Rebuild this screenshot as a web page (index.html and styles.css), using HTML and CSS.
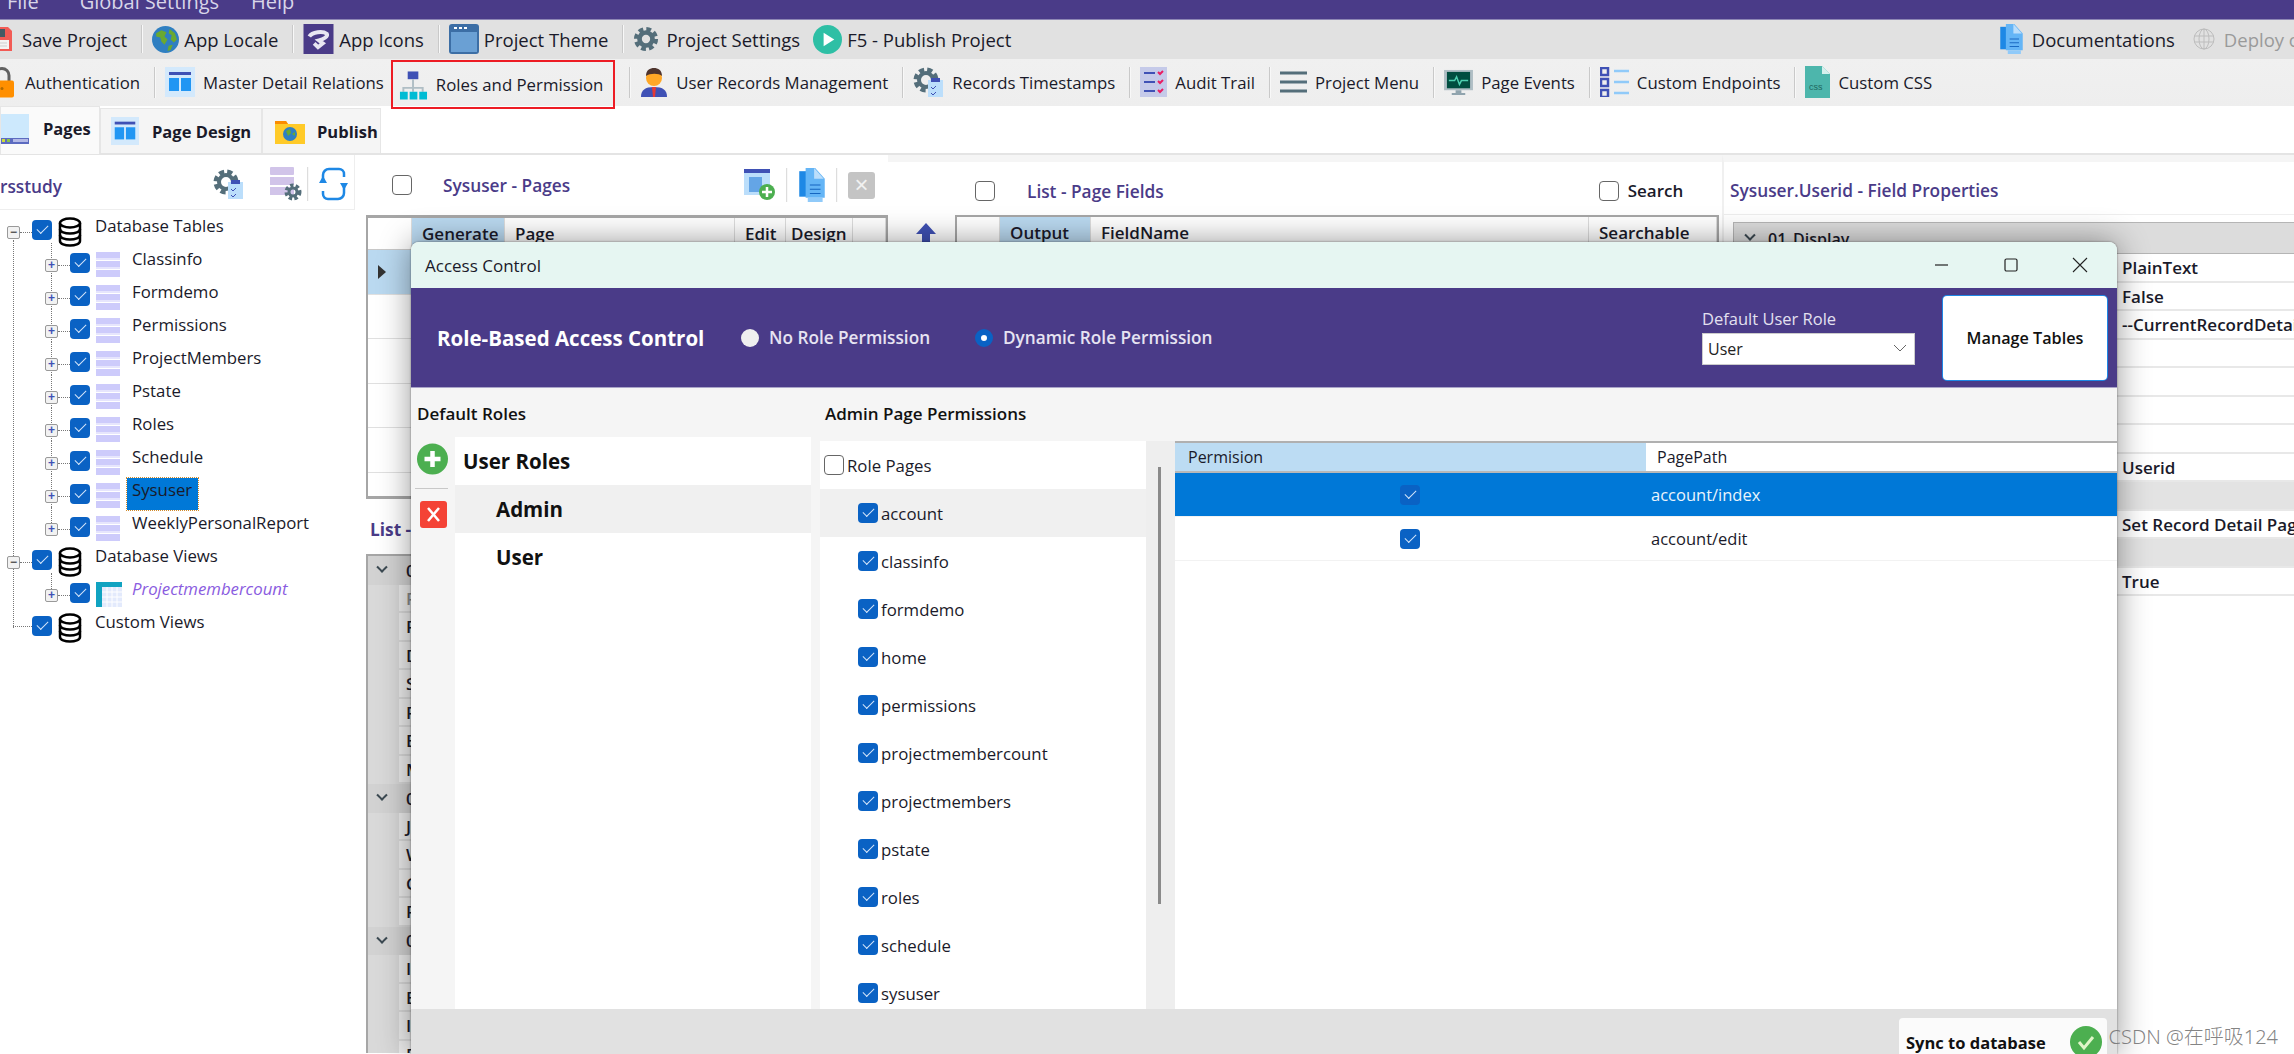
FILE: index.html
```html
<!DOCTYPE html>
<html lang="en">
<head>
    <meta charset="UTF-8">
    <meta name="viewport" content="width=device-width, initial-scale=1.0">
    <title>Access Control</title>
    <link rel="stylesheet" href="styles.css">
</head>
<body>
    <svg class="defs" width="0" height="0">
        <symbol id="i-save" viewBox="0 0 26 26"><path d="M1 1h20l4 4v20H1z" fill="#f25b55"/><rect x="4" y="3" width="14" height="8" fill="#455a64"/><rect x="4" y="14" width="18" height="9" fill="#f4f4f4"/><path d="M6 17h14M6 20h14" stroke="#cfcfcf"/></symbol>
        <symbol id="i-globe" viewBox="0 0 26 26"><circle cx="13" cy="13" r="13" fill="#2f7fc1"/><path d="M4 7l5-3 5 2-2 4 3 3-3 5-3-3-1-4-4-1zM17 3l5 4 2 6-3 3-3-3 1-4-3-2zM16 19l4-1-2 5-3 1z" fill="#6aa92f"/></symbol>
        <symbol id="i-appicons" viewBox="0 0 31 31"><rect width="31" height="31" fill="#4a3b88"/><path d="M6 13c3-5 14-6 18-3 2 3-4 6-8 7l4 3-5 4-4-4" fill="none" stroke="#e8e6f2" stroke-width="4"/></symbol>
        <symbol id="i-theme" viewBox="0 0 30 30"><rect width="30" height="30" rx="3" fill="#3c6ea5"/><rect x="2" y="8" width="26" height="20" fill="#6aa0d4"/><path d="M5 4h3M10 4h3M15 4h3" stroke="#fff" stroke-width="2"/></symbol>
        <symbol id="i-gear" viewBox="0 0 28 28"><circle cx="14" cy="14" r="10.5" fill="none" stroke="#546e7a" stroke-width="5" stroke-dasharray="5 3.25"/><circle cx="14" cy="14" r="7" fill="none" stroke="#546e7a" stroke-width="5"/></symbol>
        <symbol id="i-play" viewBox="0 0 30 30"><circle cx="15" cy="15" r="15" fill="#2ebfa5"/><path d="M11 8l11 7-11 7z" fill="#fff"/></symbol>
        <symbol id="i-lock" viewBox="0 0 30 30"><path d="M8 14V8a7 7 0 0 1 14 0v6" fill="none" stroke="#616161" stroke-width="3"/><rect x="3" y="13" width="24" height="17" rx="2" fill="#ff8f00"/><circle cx="15" cy="21" r="1.5" fill="#b26a00"/></symbol>
        <symbol id="i-layout" viewBox="0 0 30 30"><rect width="30" height="30" fill="#d3e9fc"/><rect x="4" y="5" width="22" height="3" fill="#3f51b5"/><rect x="4" y="11" width="10" height="13" fill="#2196f3"/><rect x="16" y="11" width="10" height="13" fill="#2196f3"/></symbol>
        <symbol id="i-org" viewBox="0 0 30 30"><rect x="9" y="1" width="11" height="8" fill="#3f51b5"/><path d="M14.500 9v9M4.500 22v-4h20v4M14.500 18v4" fill="none" stroke="#b0bec5" stroke-width="2"/><path d="M1 22h8v8H1zM11 22h8v8h-8zM21 22h8v8h-8z" fill="#00bcd4"/></symbol>
        <symbol id="i-user" viewBox="0 0 28 30"><path d="M1 30c0-7 4-10 13-10s13 3 13 10z" fill="#3f51b5"/><path d="M12 20h4l-1 10h-2z" fill="#e53935"/><circle cx="14" cy="11" r="8" fill="#ffa726"/><path d="M6 9c0-6 4-8 8-8s8 2 8 8c-3-3-12-3-16 0z" fill="#4e342e"/></symbol>
        <symbol id="i-gearclip" viewBox="0 0 31 30"><circle cx="13" cy="13" r="10" fill="none" stroke="#546e7a" stroke-width="5" stroke-dasharray="5 3"/><circle cx="13" cy="13" r="7" fill="none" stroke="#546e7a" stroke-width="4"/><rect x="15" y="13" width="15" height="17" fill="#bbdefb"/><rect x="18" y="11" width="9" height="4" fill="#3f51b5"/><path d="M18 20l2 2 3-3M18 26l2 2 3-3" fill="none" stroke="#3f51b5"/></symbol>
        <symbol id="i-audit" viewBox="0 0 27 30"><rect width="27" height="30" fill="#c5cae9"/><path d="M4 6h11M4 15h11M4 24h11" stroke="#3f51b5" stroke-width="2"/><path d="M18 5l2 2 3-3M18 14l2 2 3-3M18 23l2 2 3-3" fill="none" stroke="#e91e63" stroke-width="2"/></symbol>
        <symbol id="i-menu" viewBox="0 0 27 24"><path d="M0 3h27M0 12h27M0 21h27" stroke="#546e7a" stroke-width="3"/></symbol>
        <symbol id="i-monitor" viewBox="0 0 30 28"><rect y="1" width="30" height="21" fill="#b0bec5"/><rect x="3" y="3" width="24" height="17" fill="#004d40"/><path d="M5 12h6l2-4 3 8 2-4h7" fill="none" stroke="#4dd0b1" stroke-width="1.500"/><path d="M12 22h6v3h4v2H8v-2h4z" fill="#90a4ae"/></symbol>
        <symbol id="i-endpoints" viewBox="0 0 29 30"><path d="M1 1h7v7H1zM1 12h7v7H1zM1 23h7v7H1z" fill="none" stroke="#3f51b5" stroke-width="2.500"/><path d="M14 4h15M14 15h15M14 26h15" stroke="#90caf9" stroke-width="2.500"/></symbol>
        <symbol id="i-css" viewBox="0 0 25 32"><path d="M0 0h17l8 8v24H0z" fill="#4db6ac"/><path d="M17 0l8 8h-8z" fill="#d5f0ed"/><text x="4" y="24" class="css-label">css</text></symbol>
        <symbol id="i-docs" viewBox="0 0 24 32"><path d="M0 3h9v24H0z" fill="#1e88e5"/><path d="M6 0h9l9 10v18H6z" fill="#64b5f6"/><path d="M14 0l9 10h-9z" fill="#bbdefb"/><path d="M10 16h10M10 20h10M10 24h10" stroke="#1565c0"/><path d="M8 28h14v4H8z" fill="#90caf9"/></symbol>
        <symbol id="i-deploy" viewBox="0 0 22 22"><g fill="none" stroke="#bdbdbd"><circle cx="11" cy="11" r="10"/><ellipse cx="11" cy="11" rx="5" ry="10"/><path d="M1 8h20M1 14h20M11 1v20"/></g></symbol>
        <symbol id="i-pagetab" viewBox="0 0 28 30"><rect width="28" height="24" fill="#cde9fd"/><rect y="24" width="28" height="6" fill="#5c6bc0"/><rect x="1" y="25" width="3" height="3" fill="#cddc39"/><rect x="6" y="25" width="3" height="3" fill="#8bc34a"/><rect x="12" y="25" width="15" height="3" fill="#b3b9e6"/></symbol>
        <symbol id="i-folder" viewBox="0 0 30 25"><path d="M0 2h11l2 3h17v20H0z" fill="#ffca28"/><path d="M0 2h11l2 3H0z" fill="#fb8c00"/><circle cx="15" cy="15" r="7" fill="#2f7fc1"/><path d="M11 12l4-2 1 4-3 3zM17 15l3-2v4z" fill="#6aa92f"/></symbol>
        <symbol id="i-dbgear" viewBox="0 0 32 34"><rect width="24" height="8" rx="1" fill="#d1c4e9"/><rect y="10" width="24" height="8" fill="#d1c4e9"/><rect y="20" width="24" height="8" fill="#d1c4e9"/><circle cx="23" cy="25" r="6" fill="none" stroke="#546e7a" stroke-width="5" stroke-dasharray="3 2"/><circle cx="23" cy="25" r="4" fill="none" stroke="#546e7a" stroke-width="3"/></symbol>
        <symbol id="i-refresh" viewBox="0 0 30 36"><g fill="none" stroke="#1e88e5" stroke-width="2.500"><path d="M4 15V9a6 6 0 0 1 6-6h10a5 5 0 0 1 5 5v3"/><path d="M25 21v6a6 6 0 0 1-6 6H9a5 5 0 0 1-5-5v-3"/></g><path d="M0 17h8l-4-7zM21 17h8l-4 7z" fill="#1e88e5"/></symbol>
        <symbol id="i-addpage" viewBox="0 0 32 32"><rect width="26" height="26" fill="#bbdefb"/><rect width="26" height="4" fill="#3f51b5"/><rect x="5" y="8" width="13" height="15" fill="#64a5e6"/><circle cx="23" cy="23" r="8" fill="#4caf50"/><path d="M23 18v10M18 23h10" stroke="#fff" stroke-width="2.500"/></symbol>
        <symbol id="i-db" viewBox="0 0 24 30"><g fill="#fff" stroke="#000" stroke-width="2.500"><path d="M2 6v18c0 6 20 6 20 0V6"/><path d="M2 12c0 6 20 6 20 0M2 18c0 6 20 6 20 0" fill="none"/><ellipse cx="12" cy="6" rx="10" ry="4.500"/></g></symbol>
        <symbol id="i-table" viewBox="0 0 24 25"><path d="M0 0h24v6H0zM0 9h24v6H0zM0 18h24v7H0z" fill="#cdcbfb"/><path d="M0 7h24M0 16h24" stroke="#e6e5fd" stroke-width="2"/></symbol>
        <symbol id="i-view" viewBox="0 0 26 25"><rect width="26" height="25" fill="#e3eafc"/><rect width="26" height="5" fill="#11a3c1"/><rect width="6" height="25" fill="#11a3c1"/><path d="M6 10h20M6 15h20M6 20h20M11 5v20M16 5v20M21 5v20" stroke="#fff"/></symbol>
    </svg>

    <div class="menubar">
        <span class="menu-file">File</span>
        <span class="menu-settings">Global Settings</span>
        <span class="menu-help">Help</span>
    </div>

    <div class="toolbar toolbar-main">
        <div class="tool tool-save"><svg width="26" height="26"><use href="#i-save"/></svg><span>Save Project</span></div>
        <i class="sep"></i>
        <div class="tool"><svg width="27" height="29"><use href="#i-globe"/></svg><span>App Locale</span></div>
        <i class="sep"></i>
        <div class="tool"><svg width="31" height="30"><use href="#i-appicons"/></svg><span>App Icons</span></div>
        <i class="sep"></i>
        <div class="tool"><svg width="30" height="30"><use href="#i-theme"/></svg><span>Project Theme</span></div>
        <i class="sep"></i>
        <div class="tool tool-settings"><svg width="26" height="26"><use href="#i-gear"/></svg><span>Project Settings</span></div>
        <div class="tool tool-publish"><svg width="29" height="29"><use href="#i-play"/></svg><span>F5 - Publish Project</span></div>
        <div class="tool tool-docs"><svg width="23" height="30"><use href="#i-docs"/></svg><span>Documentations</span></div>
        <div class="tool tool-deploy"><svg width="22" height="22"><use href="#i-deploy"/></svg><span>Deploy o</span></div>
    </div>

    <div class="toolbar toolbar-sub">
        <div class="tool tool-auth"><svg width="30" height="31"><use href="#i-lock"/></svg><span>Authentication</span></div>
        <i class="sep"></i>
        <div class="tool"><svg width="30" height="30"><use href="#i-layout"/></svg><span>Master Detail Relations</span></div>
        <div class="tool tool-active"><svg width="29" height="30"><use href="#i-org"/></svg><span>Roles and Permission</span></div>
        <i class="sep"></i>
        <div class="tool"><svg width="28" height="30"><use href="#i-user"/></svg><span>User Records Management</span></div>
        <i class="sep"></i>
        <div class="tool"><svg width="31" height="30"><use href="#i-gearclip"/></svg><span>Records Timestamps</span></div>
        <i class="sep"></i>
        <div class="tool"><svg width="27" height="30"><use href="#i-audit"/></svg><span>Audit Trail</span></div>
        <i class="sep"></i>
        <div class="tool"><svg width="27" height="24"><use href="#i-menu"/></svg><span>Project Menu</span></div>
        <i class="sep"></i>
        <div class="tool"><svg width="29" height="27"><use href="#i-monitor"/></svg><span>Page Events</span></div>
        <i class="sep"></i>
        <div class="tool"><svg width="29" height="30"><use href="#i-endpoints"/></svg><span>Custom Endpoints</span></div>
        <i class="sep"></i>
        <div class="tool"><svg width="25" height="32"><use href="#i-css"/></svg><span>Custom CSS</span></div>
    </div>

    <div class="tabs">
        <div class="tab tab-pages"><svg width="28" height="30"><use href="#i-pagetab"/></svg><span>Pages</span></div>
        <div class="tab tab-design"><svg width="30" height="28"><use href="#i-layout"/></svg><span>Page Design</span></div>
        <div class="tab tab-publish"><svg width="30" height="25"><use href="#i-folder"/></svg><span>Publish</span></div>
    </div>

    <div class="workspace">
        <section class="tree-col">
            <div class="tree-head">
                <span class="panel-title">rsstudy</span>
                <svg class="tree-gear" width="31" height="30"><use href="#i-gearclip"/></svg>
                <svg class="tree-dbgear" width="32" height="34"><use href="#i-dbgear"/></svg>
                <i class="sep"></i>
                <svg width="30" height="36"><use href="#i-refresh"/></svg>
            </div>
            <div class="tree">
                <div class="tree-row root"><b class="twist">−</b><i class="cb"></i><svg class="node-db" width="24" height="30"><use href="#i-db"/></svg><span>Database Tables</span></div>
                <div class="tree-row child"><b class="twist">+</b><i class="cb"></i><svg class="node" width="24" height="25"><use href="#i-table"/></svg><span>Classinfo</span></div>
                <div class="tree-row child"><b class="twist">+</b><i class="cb"></i><svg class="node" width="24" height="25"><use href="#i-table"/></svg><span>Formdemo</span></div>
                <div class="tree-row child"><b class="twist">+</b><i class="cb"></i><svg class="node" width="24" height="25"><use href="#i-table"/></svg><span>Permissions</span></div>
                <div class="tree-row child"><b class="twist">+</b><i class="cb"></i><svg class="node" width="24" height="25"><use href="#i-table"/></svg><span>ProjectMembers</span></div>
                <div class="tree-row child"><b class="twist">+</b><i class="cb"></i><svg class="node" width="24" height="25"><use href="#i-table"/></svg><span>Pstate</span></div>
                <div class="tree-row child"><b class="twist">+</b><i class="cb"></i><svg class="node" width="24" height="25"><use href="#i-table"/></svg><span>Roles</span></div>
                <div class="tree-row child"><b class="twist">+</b><i class="cb"></i><svg class="node" width="24" height="25"><use href="#i-table"/></svg><span>Schedule</span></div>
                <div class="tree-row child"><b class="twist">+</b><i class="cb"></i><svg class="node" width="24" height="25"><use href="#i-table"/></svg><span class="node-selected">Sysuser</span></div>
                <div class="tree-row child last"><b class="twist">+</b><i class="cb"></i><svg class="node" width="24" height="25"><use href="#i-table"/></svg><span>WeeklyPersonalReport</span></div>
                <div class="tree-row root"><b class="twist">−</b><i class="cb"></i><svg class="node-db" width="24" height="30"><use href="#i-db"/></svg><span>Database Views</span></div>
                <div class="tree-row child last"><b class="twist">+</b><i class="cb"></i><svg class="node node-wide" width="26" height="25"><use href="#i-view"/></svg><span class="node-view">Projectmembercount</span></div>
                <div class="tree-row root end"><i class="cb"></i><svg class="node-db" width="24" height="30"><use href="#i-db"/></svg><span>Custom Views</span></div>
            </div>
        </section>

        <section class="pages-col">
            <div class="panel-head pages-head">
                <i class="cb-off"></i>
                <span class="panel-title">Sysuser - Pages</span>
                <svg class="pages-add" width="32" height="32"><use href="#i-addpage"/></svg>
                <i class="sep"></i>
                <svg width="28" height="34"><use href="#i-docs"/></svg>
                <i class="sep"></i>
                <b class="btn-close-gray">×</b>
            </div>
            <div class="data-grid pages-grid">
                <div class="grid-head pages-cols">
                    <span></span><span class="col-on">Generate</span><span>Page</span><span>Edit</span><span>Design</span><span></span>
                </div>
                <div class="grid-row grid-row-sel"><span class="row-head"><i class="row-arrow"></i></span></div>
                <div class="grid-row"><span class="row-head"></span></div>
                <div class="grid-row"><span class="row-head"></span></div>
                <div class="grid-row"><span class="row-head"></span></div>
                <div class="grid-row"><span class="row-head"></span></div>
            </div>
            <div class="list-title"><span class="panel-title">List -</span></div>
            <div class="left-props">
                <div class="cat"><i class="chev"></i><span>0</span></div>
                <div class="prop prop-dim"><span>R</span></div>
                <div class="prop"><span>P</span></div>
                <div class="prop"><span>D</span></div>
                <div class="prop"><span>S</span></div>
                <div class="prop"><span>R</span></div>
                <div class="prop"><span>E</span></div>
                <div class="prop"><span>M</span></div>
                <div class="cat"><i class="chev"></i><span>0</span></div>
                <div class="prop"><span>J</span></div>
                <div class="prop"><span>W</span></div>
                <div class="prop"><span>C</span></div>
                <div class="prop"><span>R</span></div>
                <div class="cat"><i class="chev"></i><span>0</span></div>
                <div class="prop"><span>I</span></div>
                <div class="prop"><span>E</span></div>
                <div class="prop"><span>I</span></div>
                <div class="prop"><span>F</span></div>
            </div>
        </section>

        <section class="fields-col">
            <div class="panel-head fields-head">
                <i class="cb-off"></i>
                <span class="panel-title">List - Page Fields</span>
                <i class="cb-off search-cb"></i>
                <span class="search-label">Search</span>
            </div>
            <div class="fields-body">
                <svg class="arrow-up" width="20" height="22" viewBox="0 0 20 22"><path d="M10 0l10 11h-6v11H6V11H0z" fill="#3f51b5"/></svg>
                <div class="data-grid fields-grid">
                    <div class="grid-head fields-cols">
                        <span></span><span class="col-on">Output</span><span>FieldName</span><span>Searchable</span>
                    </div>
                </div>
            </div>
        </section>

        <section class="props-col">
            <div class="props-title"><span class="panel-title">Sysuser.Userid - Field Properties</span></div>
            <div class="right-props">
                <div class="right-cat"><i class="chev"></i><span>01_Display</span></div>
                <div class="right-row">PlainText</div>
                <div class="right-row">False</div>
                <div class="right-row">--CurrentRecordDetails</div>
                <div class="right-row"></div>
                <div class="right-row"></div>
                <div class="right-row"></div>
                <div class="right-row"></div>
                <div class="right-row">Userid</div>
                <div class="right-row right-gray"></div>
                <div class="right-row">Set Record Detail Page</div>
                <div class="right-row right-gray"></div>
                <div class="right-row">True</div>
            </div>
        </section>
    </div>

    <div class="dialog">
        <div class="dialog-title">
            <span>Access Control</span>
            <div class="win-btns">
                <svg width="16" height="16" viewBox="0 0 16 16"><path d="M1 8h13" stroke="#222" stroke-width="1.200"/></svg>
                <svg width="16" height="16" viewBox="0 0 16 16"><rect x="2" y="2" width="12" height="12" rx="1.500" fill="none" stroke="#222" stroke-width="1.200"/></svg>
                <svg width="16" height="16" viewBox="0 0 16 16"><path d="M1 1l14 14M15 1L1 15" stroke="#222" stroke-width="1.100"/></svg>
            </div>
        </div>
        <div class="dialog-band">
            <span class="band-title">Role-Based Access Control</span>
            <label class="radio radio-none"><i></i>No Role Permission</label>
            <label class="radio radio-dynamic"><i class="radio-on"></i>Dynamic Role Permission</label>
            <div class="role-select">
                <span class="role-label">Default User Role</span>
                <div class="select"><span>User</span><svg width="14" height="9" viewBox="0 0 14 9"><path d="M1 1l6 6 6-6" fill="none" stroke="#666"/></svg></div>
            </div>
            <button class="manage-btn">Manage Tables</button>
        </div>
        <div class="dialog-body">
            <div class="roles-pane">
                <h3 class="section-title">Default Roles</h3>
                <div class="roles-main">
                    <div class="role-tools">
                        <svg width="31" height="32" viewBox="0 0 31 32"><circle cx="15.500" cy="16" r="15.500" fill="#4caf50"/><path d="M15.500 8v16M7.500 16h16" stroke="#fff" stroke-width="4.500"/></svg>
                        <hr>
                        <svg width="27" height="27" viewBox="0 0 27 27"><rect width="27" height="27" rx="3" fill="#f44336"/><path d="M8 7l11 13M19 7L8 20" stroke="#fff" stroke-width="2.500"/></svg>
                    </div>
                    <div class="role-list">
                        <div class="role-row role-top">User Roles</div>
                        <div class="role-row role-on">Admin</div>
                        <div class="role-row">User</div>
                    </div>
                </div>
            </div>
            <div class="pages-pane">
                <h3 class="section-title">Admin Page Permissions</h3>
                <div class="pages-main">
                    <div class="page-list">
                        <div class="page-row page-top"><i class="cb-off"></i>Role Pages</div>
                        <div class="page-row page-on"><i class="cb"></i>account</div>
                        <div class="page-row"><i class="cb"></i>classinfo</div>
                        <div class="page-row"><i class="cb"></i>formdemo</div>
                        <div class="page-row"><i class="cb"></i>home</div>
                        <div class="page-row"><i class="cb"></i>permissions</div>
                        <div class="page-row"><i class="cb"></i>projectmembercount</div>
                        <div class="page-row"><i class="cb"></i>projectmembers</div>
                        <div class="page-row"><i class="cb"></i>pstate</div>
                        <div class="page-row"><i class="cb"></i>roles</div>
                        <div class="page-row"><i class="cb"></i>schedule</div>
                        <div class="page-row"><i class="cb"></i>sysuser</div>
                    </div>
                    <div class="list-scroll"><i></i></div>
                    <div class="perm-table">
                        <div class="perm-head"><span class="perm-col-on">Permision</span><span class="perm-path">PagePath</span></div>
                        <div class="perm-row perm-row-sel"><span><i class="cb"></i></span><span>account/index</span></div>
                        <div class="perm-row"><span><i class="cb"></i></span><span>account/edit</span></div>
                    </div>
                </div>
            </div>
        </div>
        <div class="dialog-foot">
            <button class="sync-btn"><span>Sync to database</span><svg width="32" height="32" viewBox="0 0 32 32"><circle cx="16" cy="16" r="16" fill="#4caf50"/><path d="M9 16l5 6 9-11" fill="none" stroke="#dff5c8" stroke-width="3"/></svg></button>
        </div>
    </div>

    <div class="watermark">CSDN @在呼吸124</div>
</body>
</html>
```

FILE: styles.css
```css
* {
    box-sizing: border-box;
}
body {
    margin: 0;
    width: 2294px;
    height: 1054px;
    overflow: hidden;
    position: relative;
    background-color: #fff;
    color: #1a1a2a;
    font-family: "Open Sans", "Noto Sans", sans-serif;
    font-size: 17px;
}
svg {
    flex-shrink: 0;
}
.defs {
    position: absolute;
}
.css-label {
    font-family: "Liberation Sans", sans-serif;
    font-size: 9px;
    fill: #20685f;
}
h3 {
    margin: 0;
}

/* menu and toolbars */
.menubar {
    height: 20px;
    background-color: #4a3b88;
    border-bottom: 1px solid #8d86b4;
    color: #d8d5e8;
    display: flex;
    align-items: flex-end;
    overflow: hidden;
    font-size: 20px;
    line-height: 24px;
    padding-left: 7px;
    padding-bottom: 5px;
}
.menu-settings {
    margin-left: 41px;
}
.menu-help {
    margin-left: 32px;
}
.toolbar {
    display: flex;
    align-items: center;
    white-space: nowrap;
}
.toolbar-main {
    height: 39px;
    background-color: #e1e1e1;
    font-size: 18.500px;
    padding-bottom: 1px;
    overflow: hidden;
}
.toolbar-sub {
    height: 47px;
    background-color: #eeeeee;
    background: linear-gradient(#f0f0f0, #eeeeee);
    font-size: 16.800px;
    padding-bottom: 1px;
}
.tool {
    display: flex;
    align-items: center;
    gap: 5px;
}
.toolbar-sub .tool {
    gap: 8px;
}
.sep {
    width: 2px;
    height: 28px;
    background-color: #c9c9c9;
    border-right: 1px solid #f8f8f8;
    margin: 0 9px 0 14px;
    flex-shrink: 0;
}
.toolbar-sub .sep {
    height: 31px;
}
.tool-save {
    margin-left: -13px;
    gap: 9px;
}
.tool-settings {
    gap: 7px;
}
.tool-publish {
    margin-left: 13px;
}
.tool-docs {
    margin-left: auto;
    gap: 9px;
}
.tool-deploy {
    margin: 0 -6px 0 18px;
    gap: 9px;
    color: #9a9a9a;
}
.tool-auth {
    margin-left: -13px;
    gap: 11px;
}
.tool-active {
    height: 49px;
    align-self: flex-start;
    margin: 1px 0 0 7px;
    padding: 0 10px 0 6px;
    border: 2px solid #ed1c24;
    position: relative;
}

/* tabs */
.tabs {
    height: 49px;
    display: flex;
    align-items: flex-end;
    border-bottom: 2px solid #e4e4e4;
    font-weight: 700;
    font-size: 16.500px;
}
.tab {
    display: flex;
    align-items: center;
    background-color: #f5f5f5;
    border: 1px solid #e6e6e6;
    border-bottom: 0;
    height: 45px;
}
.tab-pages {
    width: 100px;
    height: 48px;
    background-color: #fafafa;
    gap: 14px;
    padding-bottom: 4px;
    margin-bottom: -1px;
}
.tab-design {
    width: 162px;
    padding-left: 9px;
    gap: 12px;
}
.tab-publish {
    width: 119px;
    padding-left: 12px;
    gap: 12px;
}

/* workspace columns */
.workspace {
    display: flex;
    height: 898px;
    overflow: hidden;
}
.panel-title {
    color: #4a3b88;
    font-weight: 600;
    font-size: 17.300px;
}
.tree-col {
    width: 360px;
    flex-shrink: 0;
}
.tree-head {
    height: 55px;
    width: 355px;
    display: flex;
    align-items: center;
    padding-top: 4px;
    border-right: 1px solid #eee;
    border-bottom: 1px solid #eee;
}
.tree-head .panel-title {
    margin-top: 5px;
}
.tree-gear {
    margin-left: 151px;
}
.tree-dbgear {
    margin-left: 26px;
}
.tree-head .sep {
    height: 34px;
    margin: 0 10px 0 5px;
    background-color: #ddd;
}
.tree {
    position: relative;
    font-size: 16.800px;
}
.tree::before {
    content: "";
    position: absolute;
    left: 13px;
    top: 30px;
    height: 388px;
    border-left: 1px dotted #777;
}
.tree-row {
    height: 33px;
    display: flex;
    align-items: flex-start;
    position: relative;
    line-height: 32px;
    white-space: nowrap;
}
.tree-row.root {
    padding-left: 7px;
}
.tree-row.root.end {
    padding-left: 32px;
}
.tree-row.root.end::after {
    content: "";
    position: absolute;
    left: 13px;
    top: 20px;
    width: 19px;
    border-top: 1px dotted #777;
}
.tree-row.child {
    padding-left: 45px;
}
.tree-row.child::before {
    content: "";
    position: absolute;
    left: 51px;
    top: 0;
    height: 33px;
    border-left: 1px dotted #777;
}
.tree-row.child.last::before {
    height: 22px;
}
.twist {
    width: 13px;
    height: 13px;
    margin-top: 16px;
    border: 1px solid #999;
    border-radius: 2px;
    background-color: #f2f2f2;
    color: #3f51b5;
    font: 700 12px/11px "Liberation Sans", sans-serif;
    text-align: center;
    position: relative;
    z-index: 1;
    flex-shrink: 0;
}
.root > .twist {
    color: #555;
}
.twist::after {
    content: "";
    position: absolute;
    left: 12px;
    top: 5px;
    width: 12px;
    border-top: 1px dotted #777;
}
.cb {
    display: block;
    width: 20px;
    height: 20px;
    border-radius: 4px;
    background-color: #0a62c4;
    position: relative;
    flex-shrink: 0;
}
.cb::after {
    content: "";
    position: absolute;
    left: 5px;
    top: 5px;
    width: 10px;
    height: 5px;
    border-left: 1.2px solid #d5e6fa;
    border-bottom: 1.2px solid #d5e6fa;
    transform: rotate(-45deg);
}
.cb-off {
    display: block;
    width: 20px;
    height: 20px;
    border: 1.5px solid #666;
    border-radius: 4px;
    background-color: #fff;
    flex-shrink: 0;
}
.tree-row .cb {
    margin: 10px 0 0 12px;
}
.tree-row.root.end .cb {
    margin-left: 0;
}
.node-db {
    margin: 7px 13px 0 6px;
}
.node {
    margin: 9px 12px 0 6px;
}
.node-wide {
    margin-right: 10px;
}
.node-selected {
    height: 32px;
    margin: 4px 0 0 -5px;
    padding: 0 6px 0 5px;
    background-color: #0078d7;
    outline: 1px dotted #d18b2c;
    line-height: 24px;
}
.node-view {
    color: #8a5ce0;
    font-style: italic;
}

/* pages column */
.pages-col {
    width: 528px;
    flex-shrink: 0;
    padding-left: 6px;
}
.panel-head {
    display: flex;
    align-items: center;
    height: 60px;
}
.pages-head {
    padding-left: 26px;
}
.pages-head .panel-title {
    margin-left: 31px;
}
.pages-add {
    margin-left: 174px;
}
.pages-head .sep {
    height: 34px;
    margin: 0 10px 0 10px;
    background-color: #ddd;
}
.btn-close-gray {
    width: 27px;
    height: 27px;
    border-radius: 3px;
    background-color: #c4c4c4;
    color: #f1f1f1;
    text-align: center;
    font: 400 24px/26px "Liberation Sans", sans-serif;
}
.data-grid {
    border: 2px solid #a6a6a6;
    border-bottom-width: 3px;
    font-weight: 600;
    font-size: 17px;
}
.pages-grid {
    height: 284px;
    border-top-width: 3px;
    overflow: hidden;
}
.grid-head {
    display: grid;
    height: 32px;
    align-items: center;
    border-bottom: 1px solid #c8c8c8;
    white-space: nowrap;
}
.grid-head > span {
    height: 100%;
    line-height: 32px;
    padding-left: 10px;
    border-right: 1px solid #ddd;
}
.grid-head > .col-on {
    background-color: #bad9f0;
}
.pages-cols {
    grid-template-columns: 44px 93px 230px 51px 67px 1fr;
}
.pages-cols > span:nth-child(5) {
    padding-left: 5px;
}
.fields-cols {
    grid-template-columns: 43px 91px 498px 1fr;
}
.grid-row {
    height: 44.500px;
    border-bottom: 1px solid #e0e0e0;
}
.row-head {
    display: flex;
    align-items: center;
    width: 44px;
    height: 100%;
    border-right: 1px solid #e0e0e0;
    padding-left: 10px;
}
.grid-row-sel .row-head {
    background-color: #bad9f0;
}
.row-arrow {
    border-left: 8px solid #333;
    border-top: 7px solid transparent;
    border-bottom: 7px solid transparent;
}
.list-title {
    height: 55px;
    padding: 19px 0 0 4px;
    line-height: 24px;
}
.list-title .panel-title {
    font-weight: 700;
}
.left-props {
    border-top: 2px solid #a6a6a6;
    border-left: 2px solid #a6a6a6;
    background-color: #d9d9d9;
    font-weight: 600;
}
.cat {
    display: flex;
    align-items: center;
    height: 28.500px;
    background-color: #d2d2d2;
    padding-left: 10px;
    gap: 20px;
    font-size: 17px;
}
.chev {
    width: 8px;
    height: 8px;
    border-right: 2px solid #3c4a52;
    border-bottom: 2px solid #3c4a52;
    transform: rotate(45deg) translate(-2px, -2px);
    flex-shrink: 0;
}
.prop {
    height: 28.500px;
    margin-left: 31px;
    padding-left: 7px;
    background-color: #ececec;
    border-bottom: 2px solid #d9d9d9;
    line-height: 27px;
    font-size: 17px;
}
.prop-dim {
    color: #8a8a8a;
}

/* fields column */
.fields-col {
    width: 834px;
    flex-shrink: 0;
    border-top: 7px solid #f5f5f5;
}
.fields-head {
    height: 53px;
    padding: 5px 0 0 87px;
}
.fields-head .panel-title {
    margin-left: 32px;
}
.search-cb {
    margin-left: 435px;
}
.search-label {
    margin: -2px 0 0 9px;
    font-weight: 600;
}
.fields-body {
    display: flex;
    align-items: flex-start;
}
.arrow-up {
    margin: 8px 19px 0 28px;
}
.fields-grid {
    width: 764px;
    height: 60px;
}

/* field properties column */
.props-col {
    flex: 1;
    border-top: 7px solid #f5f5f5;
    border-left: 2px solid #f0f0f0;
}
.props-title {
    height: 53px;
    padding: 17px 0 0 6px;
    line-height: 24px;
    border-bottom: 1px solid #eee;
}
.right-props {
    margin: 7px 0 0 9px;
    font-weight: 600;
}
.right-cat {
    display: flex;
    height: 32px;
    padding: 5px 0 0 12px;
    gap: 14px;
    background-color: #dcdcdc;
    border: 1px solid #b5b5b5;
    font-size: 16px;
    overflow: hidden;
    align-items: flex-start;
}
.right-cat .chev {
    margin-top: 6px;
}
.right-row {
    height: 28.500px;
    padding-left: 389px;
    line-height: 27px;
    border-bottom: 2px solid #e8e8e8;
    white-space: nowrap;
    overflow: hidden;
}
.right-gray {
    background-color: #e3e3e3;
}

/* dialog */
.dialog {
    position: absolute;
    left: 411px;
    top: 242px;
    width: 1706px;
    height: 812px;
    display: flex;
    flex-direction: column;
    background-color: #f5f5f5;
    border-radius: 8px 8px 0 0;
    box-shadow: 0 0 32px rgba(0, 0, 0, 0.42), 0 0 2px rgba(0, 0, 0, 0.5);
    overflow: hidden;
}
.dialog-title {
    height: 46px;
    background-color: #e6f6f2;
    display: flex;
    align-items: center;
    justify-content: space-between;
    padding-left: 14px;
    font-size: 17px;
}
.win-btns {
    display: flex;
    gap: 53px;
    padding-right: 29px;
}
.dialog-band {
    height: 100px;
    background-color: #4a3b88;
    border-bottom: 1px solid #a9a4c8;
    color: #fff;
    display: flex;
    align-items: center;
    padding-left: 26px;
}
.band-title {
    font-size: 20.500px;
    font-weight: 700;
    width: 304px;
    white-space: nowrap;
}
.radio {
    display: flex;
    align-items: center;
    gap: 10px;
    font-weight: 600;
    font-size: 17.200px;
    color: #e6e3f2;
    white-space: nowrap;
}
.radio i {
    width: 18px;
    height: 18px;
    border-radius: 50%;
    background-color: #efefef;
}
.radio .radio-on {
    background-color: #fff;
    border: 6px solid #0a62c4;
}
.radio-none {
    width: 234px;
}
.role-select {
    margin-left: auto;
    margin-top: -4px;
    width: 213px;
}
.role-label {
    display: block;
    font-size: 16.500px;
    color: #e3e0f0;
    line-height: 24px;
    margin-bottom: 2px;
}
.select {
    height: 32px;
    background-color: #fff;
    border: 1px solid #ccc;
    display: flex;
    align-items: center;
    justify-content: space-between;
    padding: 0 7px 0 5px;
    color: #222;
    font-size: 16px;
}
.manage-btn {
    width: 164px;
    height: 84px;
    margin: 0 10px 0 28px;
    background-color: #fff;
    border: 0;
    border-radius: 4px;
    box-shadow: 0 0 0 1px #1e88e5;
    font: 600 16.200px "Open Sans", sans-serif;
    color: #111;
}
.dialog-body {
    flex: 1;
    display: flex;
    min-height: 0;
}
.section-title {
    font-size: 17px;
    font-weight: 600;
    color: #111;
    height: 49px;
    line-height: 52px;
    white-space: nowrap;
}
.roles-pane {
    width: 409px;
    flex-shrink: 0;
    display: flex;
    flex-direction: column;
}
.roles-pane .section-title {
    padding-left: 6px;
}
.roles-main {
    flex: 1;
    display: flex;
    min-height: 0;
}
.role-tools {
    width: 44px;
    padding: 6px 0 0 6px;
}
.role-tools svg {
    display: block;
}
.role-tools svg:last-child {
    margin: 12px 0 0 3px;
}
.role-tools hr {
    width: 33px;
    margin: 13px 0 0 -2px;
    border: 0;
    border-top: 1px solid #c8c8c8;
}
.role-list {
    width: 356px;
    background-color: #fff;
    font-size: 20.500px;
    font-weight: 700;
}
.role-row {
    height: 48px;
    line-height: 49px;
    padding-left: 41px;
    color: #111;
}
.role-top {
    padding-left: 8px;
}
.role-on {
    background-color: #f0f0f0;
}
.pages-pane {
    flex: 1;
    min-width: 0;
    display: flex;
    flex-direction: column;
}
.pages-pane .section-title {
    height: 53px;
    padding-left: 5px;
}
.pages-main {
    flex: 1;
    display: flex;
    min-height: 0;
}
.page-list {
    width: 326px;
    background-color: #fff;
    overflow: hidden;
    font-size: 16.800px;
}
.page-row {
    height: 48px;
    display: flex;
    align-items: center;
    gap: 3px;
    padding-left: 38px;
}
.page-top {
    padding-left: 4px;
}
.page-on {
    background-color: #f0f0f0;
}
.list-scroll {
    width: 29px;
    background-color: #eeeeee;
    padding: 26px 0 0 12px;
}
.list-scroll i {
    display: block;
    width: 3px;
    height: 437px;
    background-color: #8a8a8a;
}
.perm-table {
    flex: 1;
    background-color: #fff;
    font-size: 16.500px;
}
.perm-head {
    display: flex;
    height: 32px;
    border-top: 2px solid #b0b0b0;
    border-bottom: 2px solid #b8b8b8;
    line-height: 28px;
    font-size: 16px;
}
.perm-head span {
    width: 50%;
    padding-left: 13px;
}
.perm-head .perm-col-on {
    background-color: #bcdcf3;
}
.perm-head .perm-path {
    padding-left: 11px;
}
.perm-row {
    display: flex;
    height: 44px;
    align-items: center;
    border-bottom: 1px solid #f2f2f2;
}
.perm-row span {
    width: 50%;
    padding-left: 5px;
}
.perm-row span:first-child {
    padding-left: 225px;
}
.perm-row-sel {
    background-color: #0078d7;
    color: #eaf4fc;
}
.dialog-foot {
    height: 45px;
    flex-shrink: 0;
    background-color: #e1e1e1;
    display: flex;
    justify-content: flex-end;
    padding: 9px 10px 0 0;
}
.sync-btn {
    width: 208px;
    height: 48px;
    display: flex;
    align-items: center;
    justify-content: space-between;
    background-color: #fbfbfb;
    border: 0;
    border-radius: 4px;
    padding: 0 5px 0 7px;
    font: 700 16.500px "Open Sans", sans-serif;
    color: #111;
    white-space: nowrap;
}

/* watermark over the window */
.watermark {
    position: absolute;
    right: 16px;
    bottom: 4px;
    font-family: "Noto Sans", "Noto Sans CJK SC", sans-serif;
    font-size: 20px;
    font-weight: 300;
    color: rgba(110, 110, 110, 0.85);
    white-space: nowrap;
}
```
